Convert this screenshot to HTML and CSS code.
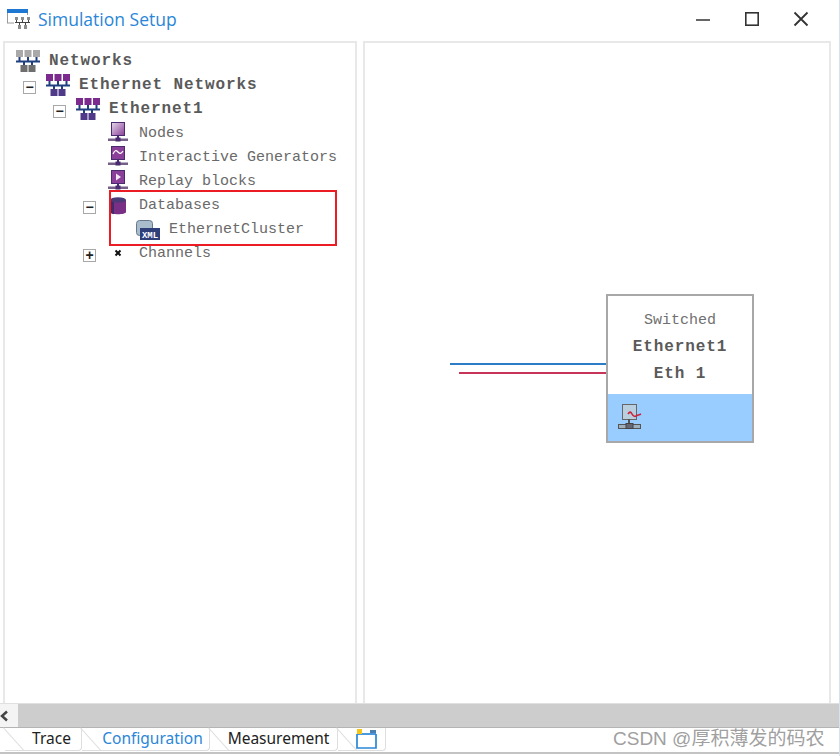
FILE: index.html
```html
<html>
    <head>
        <link rel="stylesheet" href="styles.css">
    </head>
    <body>
        <svg class="defs" width="0" height="0">
            <defs>
                <linearGradient id="screen" x1="0" y1="0" x2="1" y2="1">
                    <stop offset="0" stop-color="#e4d8ea"/>
                    <stop offset="1" stop-color="#8a3f98"/>
                </linearGradient>
                <symbol id="net" viewBox="0 0 24 22">
                    <g fill="var(--net-top)">
                        <rect x="0" y="0" width="7" height="7"/>
                        <rect x="8.5" y="0" width="7" height="7"/>
                        <rect x="17" y="0" width="7" height="7"/>
                    </g>
                    <path d="M3.5 7v4M12 7v4M20.5 7v4M0 11.5h24M8 12v4M16 12v4" stroke="#1f3f7f" stroke-width="2" fill="none"/>
                    <g fill="var(--net-bottom)">
                        <rect x="4.5" y="15" width="7" height="7"/>
                        <rect x="12.5" y="15" width="7" height="7"/>
                    </g>
                </symbol>
                <symbol id="node" viewBox="0 0 20 22">
                    <rect x="3.5" y="0.5" width="13" height="13" fill="url(#screen)" stroke="#4a2a70"/>
                    <path d="M10 14v4" stroke="#4a2a70" stroke-width="2"/>
                    <rect x="0" y="16.5" width="20" height="2.5" fill="#75608a"/>
                    <rect x="7.5" y="15.5" width="5" height="4" fill="#4a2a70"/>
                </symbol>
                <symbol id="gen" viewBox="0 0 20 22">
                    <rect x="3.5" y="0.5" width="13" height="13" fill="#8a3f98" stroke="#4a2a70"/>
                    <path d="M5 8c2-4 3-4 5-2s3 2 5-1" stroke="#fff" stroke-width="1.3" fill="none"/>
                    <path d="M10 14v4" stroke="#4a2a70" stroke-width="2"/>
                    <rect x="0" y="16.5" width="20" height="2.5" fill="#75608a"/>
                    <rect x="7.5" y="15.5" width="5" height="4" fill="#4a2a70"/>
                </symbol>
                <symbol id="replay" viewBox="0 0 20 22">
                    <rect x="3.5" y="0.5" width="13" height="13" fill="#8a3f98" stroke="#4a2a70"/>
                    <path d="M8 3.5l5 3.5-5 3.5z" fill="#f4e8f6"/>
                    <path d="M10 14v4" stroke="#4a2a70" stroke-width="2"/>
                    <rect x="0" y="16.5" width="20" height="2.5" fill="#75608a"/>
                    <rect x="7.5" y="15.5" width="5" height="4" fill="#4a2a70"/>
                </symbol>
            </defs>
        </svg>

        <div class="window">
            <div class="titlebar">
                <svg class="title-icon" width="24" height="21" viewBox="0 0 24 21">
                    <rect x="0.5" y="1" width="20" height="13" fill="#fff" stroke="#9a9a9a"/>
                    <rect x="0" y="0" width="21" height="4" fill="#1e78d2"/>
                    <rect x="7" y="6" width="17" height="15" fill="#fff"/>
                    <path d="M8 8h3v3h-3zM14 8h3v3h-3zM20 8h3v3h-3zM11 16h3v4h-3zM17 16h3v4h-3z" fill="#8c8c8c"/>
                    <path d="M9.5 11v2M15.5 11v2M21.5 11v2M8 13.5h15M12.5 14v2M18.5 14v2" stroke="#444" fill="none"/>
                </svg>
                <span class="title">Simulation Setup</span>
                <div class="controls">
                    <svg width="16" height="16" viewBox="0 0 16 16"><path d="M1 9h14" stroke="#333" stroke-width="1.5"/></svg>
                    <svg width="16" height="16" viewBox="0 0 16 16"><rect x="1.8" y="1.8" width="12.4" height="12.4" fill="none" stroke="#333" stroke-width="1.6"/></svg>
                    <svg width="16" height="16" viewBox="0 0 16 16"><path d="M1.5 1.5l13 13M14.5 1.5l-13 13" stroke="#333" stroke-width="1.8"/></svg>
                </div>
            </div>

            <div class="panes">
                <div class="tree-pane">
                    <div class="row lv0">
                        <svg class="icon net-icon grey"><use href="#net"/></svg>
                        <b>Networks</b>
                    </div>
                    <div class="row lv1">
                        <span class="toggle">&minus;</span>
                        <svg class="icon net-icon purple"><use href="#net"/></svg>
                        <b>Ethernet Networks</b>
                    </div>
                    <div class="row lv2">
                        <span class="toggle">&minus;</span>
                        <svg class="icon net-icon purple"><use href="#net"/></svg>
                        <b>Ethernet1</b>
                    </div>
                    <div class="row lv3">
                        <span class="toggle blank"></span>
                        <svg class="icon node-icon"><use href="#node"/></svg>
                        <span>Nodes</span>
                    </div>
                    <div class="row lv3">
                        <span class="toggle blank"></span>
                        <svg class="icon node-icon"><use href="#gen"/></svg>
                        <span>Interactive Generators</span>
                    </div>
                    <div class="row lv3">
                        <span class="toggle blank"></span>
                        <svg class="icon node-icon"><use href="#replay"/></svg>
                        <span>Replay blocks</span>
                    </div>
                    <div class="row lv3">
                        <span class="toggle">&minus;</span>
                        <svg class="icon db-icon" viewBox="0 0 18 18">
                            <path d="M1 3v12c0 3 16 3 16 0V3z" fill="#7a2f86"/>
                            <path d="M1 3v12c0 1 2 1.800 4 2.200V3z" fill="#3f2a6a"/>
                            <ellipse cx="9" cy="3" rx="8" ry="2.800" fill="#4b3a78"/>
                        </svg>
                        <span>Databases</span>
                    </div>
                    <div class="row lv4">
                        <span class="toggle blank"></span>
                        <svg class="icon xml-icon" viewBox="0 0 24 20">
                            <rect x="0.5" y="0.5" width="16" height="15" rx="3" fill="#a9bccb" stroke="#66788c"/>
                            <rect x="4" y="8" width="20" height="12" fill="#2f3f7a"/>
                            <text x="14" y="17.500" class="xml-text">XML</text>
                        </svg>
                        <span>EthernetCluster</span>
                    </div>
                    <div class="row lv3">
                        <span class="toggle">+</span>
                        <svg class="icon x-icon" viewBox="0 0 24 22">
                            <path d="M9.5 8.5l5 5M14.5 8.5l-5 5" stroke="#111" stroke-width="2"/>
                        </svg>
                        <span>Channels</span>
                    </div>
                    <div class="highlight"></div>
                </div>

                <div class="diagram">
                    <div class="wire blue"></div>
                    <div class="wire red"></div>
                    <div class="bus-card">
                        <div class="bus-text">
                            <span>Switched</span>
                            <b>Ethernet1</b>
                            <b>Eth 1</b>
                        </div>
                        <div class="bus-foot">
                            <svg width="24" height="26" viewBox="0 0 24 26">
                                <rect x="4.5" y="0.5" width="14" height="15" fill="#b9cfe0" stroke="#666"/>
                                <path d="M11 15v5" stroke="#555" stroke-width="2"/>
                                <rect x="0.5" y="20.5" width="22" height="4" fill="#9fb0bf" stroke="#555"/>
                                <rect x="8" y="19.5" width="7" height="5" fill="#667" stroke="#444"/>
                                <path d="M10 10c2-3 3-2 4 0s3 3 4 2 3-1 5-2" stroke="#c8243c" stroke-width="1.600" fill="none"/>
                            </svg>
                        </div>
                    </div>
                </div>
            </div>

            <div class="scrollbar">
                <div class="arrow">
                    <svg width="8" height="12" viewBox="0 0 8 12"><path d="M7 1.500L2 6l5 4.500" stroke="#444" stroke-width="2.500" fill="none"/></svg>
                </div>
                <div class="track"></div>
            </div>

            <div class="tabbar">
                <div class="tab t1">Trace</div>
                <div class="tab t2 active">Configuration</div>
                <div class="tab t3">Measurement</div>
                <div class="tab t4">
                    <svg class="tab-icon" width="22" height="20" viewBox="0 0 22 20">
                        <path d="M1 5v14h19V5" fill="none" stroke="#2a86d8" stroke-width="1.700"/>
                        <path d="M1 5h19" stroke="#2a86d8" stroke-width="1.700"/>
                        <rect x="1" y="0" width="5" height="5" fill="#f5c518"/>
                        <rect x="14" y="1" width="6" height="3" fill="#4a7fb0"/>
                    </svg>
                </div>
                <div class="watermark">CSDN @厚积薄发的码农</div>
            </div>
        </div>
    </body>
</html>
```

FILE: styles.css
```css
*{
    box-sizing: border-box;
}
body{
    margin: 0px;
    background: white;
    font-family: "Liberation Mono", monospace;
}
.defs{
    position: absolute;
}
.window{
    width: 840px;
    height: 756px;
    display: flex;
    flex-direction: column;
    overflow: hidden;
    border-right: 1px solid #d5e3ef;
}

/* title */
.titlebar{
    height: 41px;
    flex-shrink: 0;
    display: flex;
    align-items: center;
    padding-left: 7px;
}
.title-icon{
    margin-top: -3px;
}
.title{
    margin-left: 7px;
    margin-top: -4px;
    font-family: "Open Sans", sans-serif;
    font-size: 17.5px;
    color: #2b86d8;
}
.controls{
    margin-left: auto;
    margin-top: -4px;
    padding-right: 30px;
    display: flex;
    gap: 33px;
}

/* panes */
.panes{
    flex: 1;
    display: flex;
    padding-left: 3px;
    padding-right: 8px;
}
.tree-pane{
    width: 354px;
    position: relative;
    padding-top: 6px;
    border: 2px solid #e8e8e8;
    border-bottom: none;
    font-size: 15px;
    color: #6a6a6a;
}
.diagram{
    flex: 1;
    margin-left: 6px;
    position: relative;
    border: 2px solid #e8e8e8;
    border-bottom: none;
}

/* tree */
.row{
    height: 24px;
    display: flex;
    align-items: center;
    white-space: nowrap;
}
.row b{
    color: #5a5a5a;
    font-size: 16px;
    letter-spacing: 0.9px;
}
.lv0{ padding-left: 11px; }
.lv1{ padding-left: 18px; }
.lv2{ padding-left: 48px; }
.lv3{ padding-left: 78px; }
.lv4{ padding-left: 108px; }
.toggle{
    width: 13px;
    height: 13px;
    flex-shrink: 0;
    margin-top: 4px;
    margin-right: 10px;
    border: 1px solid #a8a8a8;
    display: flex;
    align-items: center;
    justify-content: center;
    font-family: "Liberation Sans", sans-serif;
    font-size: 14px;
    font-weight: bold;
    line-height: 1;
    color: #222;
}
.toggle.blank{
    border: none;
}
.icon{
    flex-shrink: 0;
    margin-right: 9px;
    width: 24px;
    height: 22px;
}
.node-icon{
    width: 20px;
    margin-left: 2px;
    margin-right: 11px;
}
.db-icon{
    height: 18px;
    width: 18px;
    margin-top: 2px;
    margin-left: 3px;
    margin-right: 12px;
}
.xml-icon{
    height: 20px;
    margin-top: 2px;
}
.xml-text{
    font-family: "Liberation Mono", monospace;
    font-size: 9px;
    font-weight: bold;
    text-anchor: middle;
    fill: white;
}
.grey{
    --net-top: #a9a9a9;
    --net-bottom: #6e6e6e;
}
.purple{
    --net-top: #7d2a8e;
    --net-bottom: #4f3a8a;
}
.highlight{
    position: absolute;
    left: 104px;
    top: 147px;
    width: 228px;
    height: 56px;
    border: 2px solid #ec1c24;
}

/* diagram */
.wire{
    position: absolute;
    height: 2px;
}
.wire.blue{
    left: 85px;
    top: 320px;
    width: 158px;
    background: #2c7cc8;
}
.wire.red{
    left: 94px;
    top: 329px;
    width: 149px;
    background: #c8345a;
}
.bus-card{
    position: absolute;
    left: 241px;
    top: 251px;
    width: 148px;
    height: 149px;
    border: 2px solid #a8a8a8;
    background: white;
    display: flex;
    flex-direction: column;
}
.bus-text{
    height: 98px;
    display: flex;
    flex-direction: column;
    align-items: center;
    padding-top: 11px;
    font-size: 15px;
    line-height: 27px;
    color: #707070;
}
.bus-text b{
    color: #5a5a5a;
    font-size: 16px;
    letter-spacing: 0.9px;
}
.bus-foot{
    flex: 1;
    background: #99ccff;
    padding: 10px 0px 0px 10px;
}

/* scrollbar */
.scrollbar{
    height: 24px;
    flex-shrink: 0;
    display: flex;
    border-top: 1px solid #e0e0e0;
}
.arrow{
    width: 18px;
    background: #f4f4f4;
    display: flex;
    align-items: center;
}
.track{
    flex: 1;
    background: #cdcdcd;
}

/* tabs */
.tabbar{
    height: 27px;
    flex-shrink: 0;
    display: flex;
    padding-left: 5px;
    border-top: 1px solid #b4b4b4;
    border-bottom: 2px solid #c4c4c4;
    margin-bottom: 2px;
    font-family: "Noto Sans", sans-serif;
    font-size: 15.5px;
    color: #222;
    position: relative;
}
.tab{
    position: relative;
    height: 23px;
    padding-bottom: 2px;
    display: flex;
    align-items: center;
    justify-content: center;
    border-right: 1px solid #dedede;
    border-bottom: 1px solid #dedede;
    border-bottom-right-radius: 4px;
}
.tab::before{
    content: "";
    position: absolute;
    left: 8px;
    top: -4px;
    width: 1px;
    height: 30px;
    background: #e0e0e0;
    transform: rotate(-42deg);
}
.t1{ width: 77px; padding-left: 17px; }
.t2{ width: 128px; padding-left: 14px; }
.t3{ width: 128px; padding-left: 10px; }
.t4{ width: 48px; padding-left: 10px; }
.tab-icon{
    margin-top: 1px;
}
.active{
    color: #2b86d8;
}
.watermark{
    position: absolute;
    left: 613px;
    top: -5px;
    font-family: "Liberation Sans", "Noto Sans CJK SC", sans-serif;
    font-size: 19px;
    color: #a0a0a0;
    white-space: nowrap;
}
```
